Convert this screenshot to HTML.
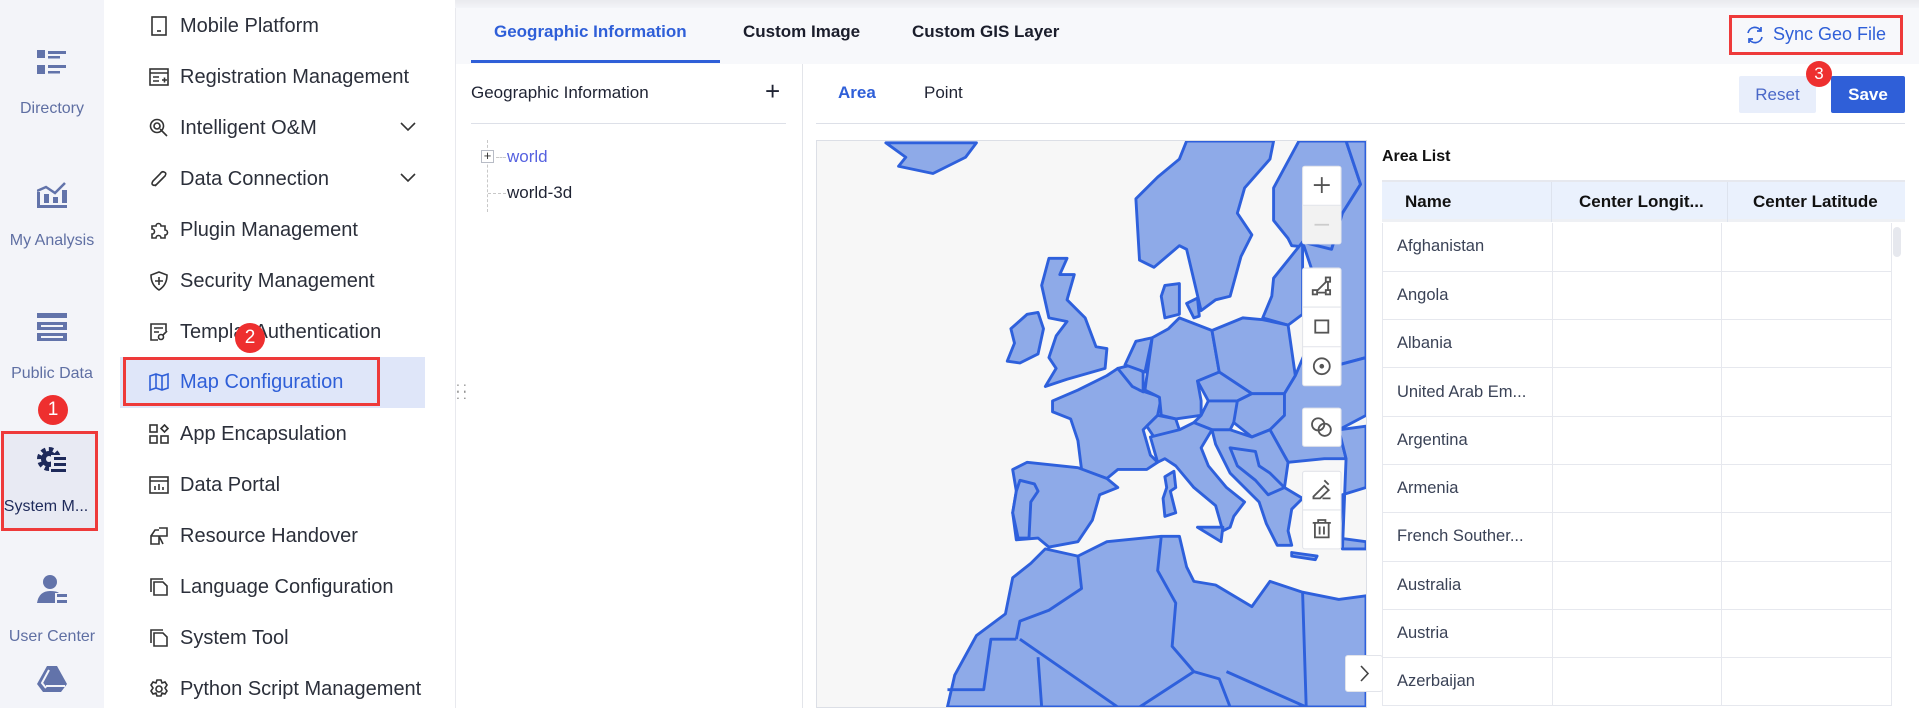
<!DOCTYPE html>
<html style="width:1919px;height:708px;overflow:hidden"><head><meta charset="utf-8"><style>
*{box-sizing:border-box;margin:0;padding:0}
body{width:1919px;height:708px;overflow:hidden;background:#fff;font-family:"Liberation Sans",sans-serif;position:relative;color:#1f2333}
.abs{position:absolute}
.rail{left:0;top:0;width:104px;height:708px;background:#f3f4f9}
.ri{position:absolute;left:0;width:104px;text-align:center;color:#5f6fa3;font-size:16px;line-height:20px}
.menu{left:104px;top:0;width:351px;height:708px;background:#fff}
.mi{position:absolute;left:149px;height:24px;display:flex;align-items:center;font-size:20px;color:#2b2f3a;white-space:nowrap}
.mi svg{width:20px;height:20px;margin-right:11px;flex:none}
.badge{position:absolute;width:30px;height:30px;border-radius:50%;background:#ee2f2f;color:#fff;font-size:19px;text-align:center;line-height:30px}
.tab{position:absolute;top:22px;font-size:17px;font-weight:bold;color:#1a1d2b}
td{border-right:1px solid #e6e8ee;border-bottom:1px solid #e6e8ee;height:48.3px;padding-left:14px;font-size:16.5px;color:#3a4256}
</style></head><body>
<div class="abs" style="left:0;top:0;width:1919px;height:8px;background:linear-gradient(#e9eaee,#f3f4f8)"></div>
<div class="abs rail"></div>
<div class="ri" style="top:50px"><svg width="30" height="28" viewBox="0 0 30 28" fill="#6273aa"><rect x="0" y="0" width="8" height="8"/><rect x="11" y="1" width="18" height="3"/><rect x="11" y="6" width="12" height="2.5"/><rect x="0" y="15" width="8" height="9"/><rect x="11" y="15" width="18" height="3"/><rect x="11" y="21" width="12" height="2.5"/></svg></div>
<div class="ri" style="top:99px">Directory</div>
<div class="ri" style="top:182px"><svg width="30" height="26" viewBox="0 0 30 26" fill="#6273aa"><rect x="0" y="10" width="3" height="16"/><rect x="0" y="23" width="30" height="3"/><rect x="7" y="12" width="5" height="9"/><rect x="16" y="15" width="5" height="6"/><rect x="25" y="8" width="5" height="13"/><path d="M0 9 L9 5 L18 11 L28 1" stroke="#6273aa" stroke-width="2.5" fill="none"/></svg></div>
<div class="ri" style="top:231px">My Analysis</div>
<div class="ri" style="top:313px"><svg width="30" height="28" viewBox="0 0 30 28" fill="#6273aa"><rect x="0" y="0" width="30" height="5"/><rect x="0" y="9" width="30" height="8"/><rect x="0" y="20" width="30" height="8"/><rect x="4" y="12" width="22" height="2" fill="#f3f4f9"/><rect x="4" y="23" width="22" height="2" fill="#f3f4f9"/></svg></div>
<div class="ri" style="top:364px">Public Data</div>
<div class="abs" style="left:3px;top:431px;width:95px;height:100px;background:#e8eaf3"></div>
<div class="abs" style="left:1px;top:431px;width:97px;height:100px;border:3px solid #ee3a3a"></div>
<div class="badge" style="left:38px;top:395px">1</div>
<div class="ri" style="top:445px"><svg width="30" height="30" viewBox="0 0 30 30"><circle cx="12" cy="14" r="9" fill="none" stroke="#1e2a5a" stroke-width="6" stroke-dasharray="4 3"/><circle cx="12" cy="14" r="8" fill="#1e2a5a"/><circle cx="12" cy="14" r="3" fill="#e8eaf3"/><rect x="14" y="10" width="16" height="20" fill="#e8eaf3"/><rect x="17" y="12" width="12" height="3" fill="#1e2a5a"/><rect x="17" y="18" width="12" height="3" fill="#1e2a5a"/><rect x="14" y="24" width="15" height="3" fill="#1e2a5a"/></svg></div>
<div class="ri" style="top:497px;color:#1e2a5a;white-space:nowrap;left:-6px">System M...</div>
<div class="ri" style="top:575px"><svg width="30" height="28" viewBox="0 0 30 28" fill="#6273aa"><circle cx="13" cy="7" r="7"/><path d="M0 28 Q2 16 13 16 Q20 16 22 18 L18 18 L18 28 Z"/><rect x="20" y="19" width="10" height="3"/><rect x="20" y="25" width="10" height="3"/></svg></div>
<div class="ri" style="top:627px">User Center</div>
<svg class="abs" style="left:37px;top:666px" width="30" height="26" viewBox="0 0 30 26" fill="#6273aa"><path d="M10 0 L20 0 L30 18 L24 26 L6 26 L0 18 Z"/><path d="M12 4 L5 17 L9 22" fill="none" stroke="#f3f4f9" stroke-width="2"/><path d="M9 20 L28 20" stroke="#f3f4f9" stroke-width="2"/></svg>

<div class="abs menu"></div>
<div class="abs" style="left:120px;top:357px;width:305px;height:51px;background:#dfe6f9"></div>
<div class="abs" style="left:123px;top:357px;width:257px;height:49px;border:3px solid #ee3a3a"></div>
<div class="mi" style="top:14px"><svg viewBox="0 0 20 20" fill="none" stroke="#333" stroke-width="1.6"><rect x="3" y="1" width="14" height="18"/><path d="M8 15h4"/></svg>Mobile Platform</div>
<div class="mi" style="top:65px"><svg viewBox="0 0 20 20" fill="none" stroke="#333" stroke-width="1.6"><rect x="1" y="2" width="18" height="16"/><path d="M1 6h18M4 10h6M4 14h6M13 13h5M15.5 10.5v5"/></svg>Registration Management</div>
<div class="mi" style="top:116px"><svg viewBox="0 0 20 20" fill="none" stroke="#333" stroke-width="1.6"><circle cx="8" cy="8" r="6.5"/><circle cx="8" cy="8" r="3"/><path d="M11 11l7 7"/></svg>Intelligent O&amp;M</div>
<div class="mi" style="top:167px"><svg viewBox="0 0 20 20" fill="none" stroke="#333" stroke-width="1.6"><path d="M6 17 L16 7 Q18 4 15 3 Q13 2 11 5 L4 12 Q2 15 4 16 Q6 17 8 15 L14 9"/></svg>Data Connection</div>
<div class="mi" style="top:218px"><svg viewBox="0 0 20 20" fill="none" stroke="#333" stroke-width="1.6"><path d="M3 6h4a2.5 2.5 0 015 0h4v4a2.5 2.5 0 010 5v3H12a2.5 2.5 0 00-5 0H3v-4a2.5 2.5 0 000-5z"/></svg>Plugin Management</div>
<div class="mi" style="top:269px"><svg viewBox="0 0 20 20" fill="none" stroke="#333" stroke-width="1.6"><path d="M10 1 L18 4 Q18 14 10 19 Q2 14 2 4 Z"/><path d="M10 6v8M6 10h8"/></svg>Security Management</div>
<div class="mi" style="top:320px"><svg viewBox="0 0 20 20" fill="none" stroke="#333" stroke-width="1.6"><path d="M9 18H2V2h15v7"/><path d="M5 6h9M5 10h5"/><circle cx="12" cy="15" r="2.5"/><path d="M14 13l4-4"/></svg>Templat Authentication</div>
<div class="mi" style="top:370px;color:#2f5fd8"><svg viewBox="0 0 20 20" fill="none" stroke="#2f5fd8" stroke-width="1.6"><path d="M1 4l6-2 6 2 6-2v14l-6 2-6-2-6 2z M7 2v14 M13 4v14"/></svg>Map Configuration</div>
<div class="mi" style="top:422px"><svg viewBox="0 0 20 20" fill="none" stroke="#333" stroke-width="1.6"><rect x="1" y="1" width="7" height="7"/><rect x="1" y="12" width="7" height="7"/><rect x="12" y="12" width="7" height="7"/><path d="M15.5 1l3.5 3.5-3.5 3.5-3.5-3.5z"/></svg>App Encapsulation</div>
<div class="mi" style="top:473px"><svg viewBox="0 0 20 20" fill="none" stroke="#333" stroke-width="1.6"><rect x="1" y="2" width="18" height="16"/><path d="M1 6h18M6 15v-4M10 15v-6M14 15v-3"/></svg>Data Portal</div>
<div class="mi" style="top:524px"><svg viewBox="0 0 20 20" fill="none" stroke="#333" stroke-width="1.6"><path d="M2 10h8v8H2zM10 2h8v8h-8M10 10l4 8M2 10l4-6h4"/></svg>Resource Handover</div>
<div class="mi" style="top:575px"><svg viewBox="0 0 20 20" fill="none" stroke="#333" stroke-width="1.6"><path d="M2 15V2h12"/><path d="M5 5h9l4 4v9H5z"/></svg>Language Configuration</div>
<div class="mi" style="top:626px"><svg viewBox="0 0 20 20" fill="none" stroke="#333" stroke-width="1.6"><path d="M2 15V2h12"/><path d="M5 5h9l4 4v9H5z"/></svg>System Tool</div>
<div class="mi" style="top:677px"><svg viewBox="0 0 20 20" fill="none" stroke="#333" stroke-width="1.6"><circle cx="10" cy="10" r="3"/><path d="M8 1h4l1 3 3-1 2 3-2 3 2 3-2 3-3-1-1 3H8l-1-3-3 1-2-3 2-3-2-3 2-3 3 1z"/></svg>Python Script Management</div>
<svg class="abs" style="left:400px;top:118px" width="16" height="70" viewBox="0 0 16 70" fill="none" stroke="#333" stroke-width="1.6"><path d="M1 5l7 7 7-7M1 56l7 7 7-7"/></svg>
<div class="badge" style="left:235px;top:323px">2</div>
<div class="abs" style="left:456px;top:384px;color:#888;font-size:14px;line-height:7px;letter-spacing:3px">::<br>::</div>

<div class="abs" style="left:455px;top:8px;width:1464px;height:56px;background:#f7f8fb"></div>
<div class="abs" style="left:455px;top:8px;width:1px;height:700px;background:#e8e9ee"></div>
<div class="tab" style="left:494px;color:#2f5fd8">Geographic Information</div>
<div class="tab" style="left:743px">Custom Image</div>
<div class="tab" style="left:912px">Custom GIS Layer</div>
<div class="abs" style="left:471px;top:60px;width:249px;height:3px;background:#2f5fd8"></div>
<div class="abs" style="left:1729px;top:15px;width:174px;height:40px;border:3px solid #ee3a3a"></div>
<div class="abs" style="left:1745px;top:24px;font-size:18px;color:#2f5fd8;display:flex;align-items:center"><svg width="20" height="20" viewBox="0 0 20 20" fill="none" stroke="#2f5fd8" stroke-width="1.7" style="margin-right:8px"><path d="M3 8a7 7 0 0113-2M17 12a7 7 0 01-13 2"/><path d="M16 2v4h-4M4 18v-4h4"/></svg>Sync Geo File</div>

<div class="abs" style="left:802px;top:64px;width:1px;height:644px;background:#e3e5ea"></div>
<div class="abs" style="left:471px;top:83px;font-size:17px;color:#1f2333">Geographic Information</div>
<div class="abs" style="left:765px;top:76px;font-size:26px;color:#1f2333;line-height:30px">+</div>
<div class="abs" style="left:471px;top:123px;width:315px;height:1px;background:#dde0e8"></div>
<div class="abs" style="left:487px;top:140px;height:72px;border-left:1px dashed #c8c8c8"></div>
<div class="abs" style="left:481px;top:150px;width:13px;height:13px;border:1px solid #b8bcc6;background:#fff;font-size:13px;line-height:10px;text-align:center;color:#333">+</div>
<div class="abs" style="left:496px;top:157px;width:10px;border-top:1px dashed #c8c8c8"></div>
<div class="abs" style="left:488px;top:193px;width:18px;border-top:1px dashed #c8c8c8"></div>
<div class="abs" style="left:507px;top:147px;font-size:17px;color:#5561e0">world</div>
<div class="abs" style="left:507px;top:183px;font-size:17px;color:#1f2333">world-3d</div>

<div class="abs" style="left:838px;top:83px;font-size:17px;font-weight:bold;color:#2f5fd8">Area</div>
<div class="abs" style="left:924px;top:83px;font-size:17px;color:#1f2333">Point</div>
<div class="abs" style="left:1739px;top:76px;width:77px;height:37px;background:#e8eefb;border-radius:2px;color:#4a68c8;font-size:17px;text-align:center;line-height:37px">Reset</div>
<div class="abs" style="left:1831px;top:76px;width:74px;height:37px;background:#2f5fd8;border-radius:2px;color:#fff;font-size:17px;font-weight:bold;text-align:center;line-height:37px">Save</div>
<div class="badge" style="left:1806px;top:61px;width:26px;height:26px;line-height:26px;font-size:17px">3</div>
<div class="abs" style="left:816px;top:123px;width:1089px;height:1px;background:#dde0e8"></div>

<div class="abs" style="left:816px;top:140px;width:551px;height:568px;border:1px solid #dcdfe6;background:#f7f7f7;overflow:hidden">
<svg style="display:block" width="549" height="566" viewBox="0 0 1515 1568" preserveAspectRatio="none">
<g fill="#8eaae8" stroke="#2e60dc" stroke-width="8" stroke-linejoin="round">
<path d="M190,5 440,5 410,45 320,90 225,70 245,45Z"/>
<path d="M1020,0 1260,0 1250,50 1180,130 1160,200 1200,260 1170,320 1140,430 1100,440 1060,470 1020,300 1000,290 930,350 890,330 880,160 940,100 1000,50Z"/>
<path d="M1330,0 1460,0 1500,120 1450,200 1420,300 1310,290 1300,270 1260,220 1260,130Z"/>
<path d="M1460,0 1515,0 1515,600 1440,620 1400,460 1340,280 1420,300 1450,200 1500,120Z"/>
<path d="M1260,380 1340,280 1340,480 1300,510 1230,490 1255,430Z"/>
<path d="M960,400 1000,395 1000,480 960,490 950,430Z"/>
<path d="M1020,450 1050,435 1055,485 1040,490Z"/>
<path d="M640,325 690,325 670,370 710,370 690,440 740,490 770,570 800,575 795,630 690,660 630,680 660,630 640,600 660,540 690,500 640,490 620,400Z"/>
<path d="M580,480 610,475 625,520 610,590 560,615 525,610 545,560 535,520Z"/>
<path d="M720,690 800,650 830,630 890,690 950,710 940,760 900,800 920,870 940,890 910,910 830,910 800,935 730,910 720,830 700,770 650,750 650,720Z"/>
<path d="M830,630 870,620 900,640 900,695 870,680Z"/>
<path d="M850,620 880,555 925,545 905,640Z"/>
<path d="M925,545 970,520 1000,490 1090,525 1110,640 1050,665 1060,720 1060,760 990,770 950,760 945,710 905,690Z"/>
<path d="M1090,525 1175,490 1230,495 1300,510 1320,650 1290,700 1200,700 1110,640Z"/>
<path d="M1050,665 1110,640 1200,700 1160,720 1110,720 1080,720Z"/>
<path d="M1060,760 1080,720 1160,720 1160,760 1140,800 1090,800 1040,780Z"/>
<path d="M1160,720 1200,700 1290,700 1290,760 1250,800 1200,820 1150,780Z"/>
<path d="M1290,700 1320,650 1400,460 1440,620 1515,600 1515,760 1440,800 1460,880 1400,880 1300,890 1250,800 1290,760Z"/>
<path d="M910,790 940,760 990,770 1000,800 970,820 930,820Z"/>
<path d="M920,820 1000,800 1040,780 1090,800 1060,850 1080,900 1130,960 1180,1000 1150,1040 1140,1070 1120,1080 1100,1010 1040,960 990,900 960,880 940,890Z"/>
<path d="M1050,1070 1120,1070 1115,1110Z"/>
<path d="M960,930 985,915 990,960 975,970 990,1030 960,1040 955,990 965,960Z"/>
<path d="M1090,800 1140,800 1200,820 1250,800 1300,890 1290,960 1340,990 1310,1020 1300,1080 1310,1120 1270,1120 1240,1060 1220,1000 1140,920 1100,840Z"/>
<path d="M1140,850 1210,860 1220,900 1250,920 1290,960 1245,980 1210,940 1160,900Z"/>
<path d="M540,910 580,890 720,905 800,935 830,960 780,980 760,1050 720,1110 640,1125 610,1100 550,1105 540,1030 550,970Z"/>
<path d="M560,940 600,950 610,970 590,1000 585,1100 555,1100 540,1030 550,970Z"/>
<path d="M1440,800 1515,790 1515,960 1450,980 1440,1100 1515,1110 1515,1130 1450,1130 1460,880Z"/>
<path d="M630,1130 720,1150 800,1110 900,1100 950,1095 1000,1095 1020,1180 1040,1220 1100,1230 1200,1290 1250,1220 1340,1250 1440,1270 1515,1260 1515,1568 360,1568 380,1480 440,1370 520,1310 540,1210 590,1170Z"/>
<path d="M1310,1140 1380,1150 1375,1160 1310,1150Z"/>
<path fill="none" d="M720,1150 730,1240 640,1300 560,1330 550,1380 M950,1095 940,1190 990,1280 980,1400 1040,1470 M1340,1250 1350,1568 M560,1380 830,1568 M610,1430 620,1568 M1040,1470 890,1568 M1040,1470 1110,1490 1140,1568 M1130,1470 1350,1568 M360,1520 460,1520 480,1380 550,1380"/>
</g>
<g fill="#fff" stroke="#e2e4ea" stroke-width="3">
<rect x="1340" y="70" width="106" height="215" rx="6"/>
<rect x="1340" y="352" width="106" height="326" rx="6"/>
<rect x="1340" y="740" width="106" height="106" rx="6"/>
<rect x="1340" y="915" width="106" height="215" rx="6"/>
</g>
<rect x="1342" y="179" width="102" height="104" fill="#f2f2f2"/>
<g stroke="#e2e4ea" stroke-width="3"><path d="M1340 178h106M1340 460h106M1340 570h106M1340 1022h106"/></g>
<g fill="none" stroke="#555" stroke-width="5">
<path d="M1393 100v44M1371 122h44"/>
<path d="M1373 232h40" stroke="#ccc"/>
<path d="M1375 420 L1410 385 L1410 420 Z"/><rect x="1368" y="413" width="12" height="12" fill="#fff"/><rect x="1404" y="413" width="12" height="12" fill="#fff"/><rect x="1404" y="378" width="12" height="12" fill="#fff"/>
<rect x="1375" y="497" width="36" height="34"/>
<circle cx="1393" cy="624" r="22"/><circle cx="1393" cy="624" r="4" fill="#555"/>
<circle cx="1383" cy="785" r="17"/><circle cx="1401" cy="800" r="17"/>
<path d="M1370 985 L1400 955 L1412 967 L1388 990 L1370 990 Z M1395 990h22 M1400 940l12 12"/>
<path d="M1368 1058h50 M1383 1058v-8h20v8 M1374 1058v40h38v-40 M1387 1068v22 M1399 1068v22"/>
</g>
</svg></div>
<div class="abs" style="left:1345px;top:655px;width:38px;height:37px;background:#fff;border:1px solid #e2e4ea;border-radius:3px"><svg width="36" height="35" viewBox="0 0 36 35" fill="none" stroke="#444" stroke-width="1.6"><path d="M15 10l7 7.5-7 7.5"/></svg></div>

<div class="abs" style="left:1382px;top:148px;font-size:16px;font-weight:bold;color:#111">Area List</div>
<div class="abs" style="left:1382px;top:180px;width:523px;height:42px;background:#eaf1fd;border-top:2px solid #e6e8ee;border-bottom:3px solid #eef0f4;font-size:17px;font-weight:bold;color:#111">
<div class="abs" style="left:23px;top:10px">Name</div>
<div class="abs" style="left:197px;top:10px">Center Longit...</div>
<div class="abs" style="left:371px;top:10px">Center Latitude</div>
<div class="abs" style="left:169px;top:0;width:1px;height:40px;background:#dde3ee"></div>
<div class="abs" style="left:345px;top:0;width:1px;height:40px;background:#dde3ee"></div>
</div>
<table class="abs" style="left:1382px;top:223px;width:510px;border-collapse:collapse;border-left:1px solid #e6e8ee">
<colgroup><col style="width:170px"><col style="width:169px"><col></colgroup>
<tr><td>Afghanistan</td><td></td><td></td></tr>
<tr><td>Angola</td><td></td><td></td></tr>
<tr><td>Albania</td><td></td><td></td></tr>
<tr><td>United Arab Em...</td><td></td><td></td></tr>
<tr><td>Argentina</td><td></td><td></td></tr>
<tr><td>Armenia</td><td></td><td></td></tr>
<tr><td>French Souther...</td><td></td><td></td></tr>
<tr><td>Australia</td><td></td><td></td></tr>
<tr><td>Austria</td><td></td><td></td></tr>
<tr><td>Azerbaijan</td><td></td><td></td></tr>
</table>
<div class="abs" style="left:1893px;top:227px;width:8px;height:30px;background:#e6e8ee;border-radius:4px"></div>
</body></html>
